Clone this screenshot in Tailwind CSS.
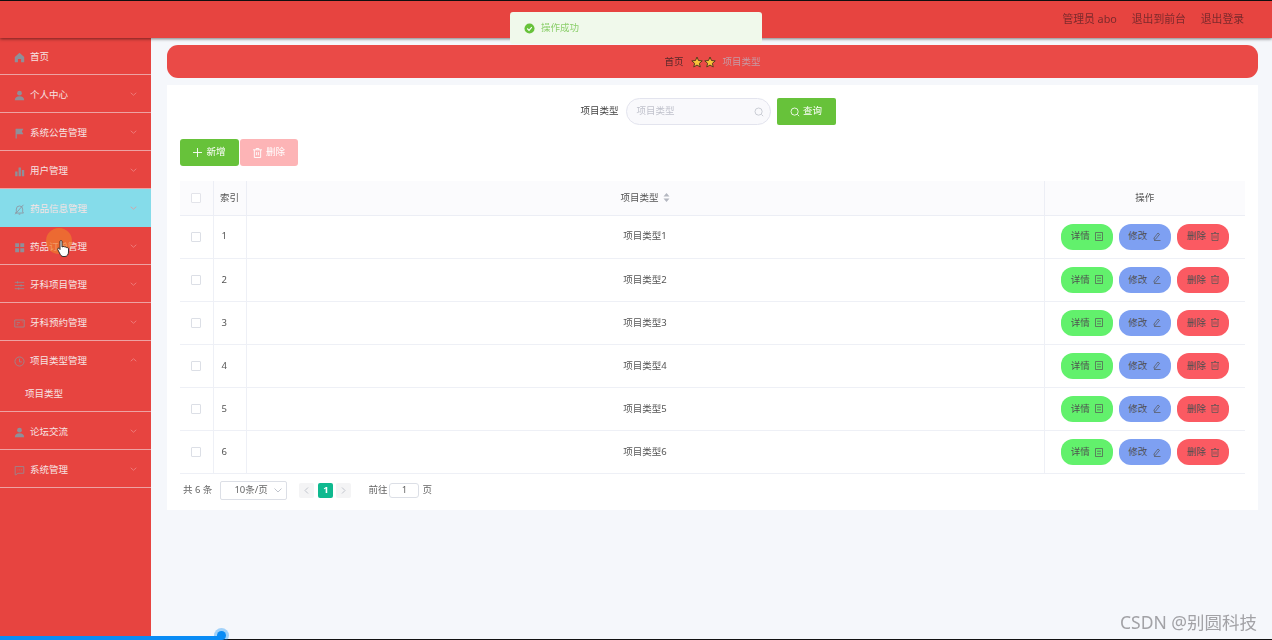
<!DOCTYPE html>
<html lang="zh-CN">
<head>
    <meta charset="UTF-8">
    <title>项目类型</title>
    <script src="https://cdn.jsdelivr.net/npm/@tailwindcss/browser@4"></script>
</head>
<body class="w-[1272px] h-[640px] overflow-hidden relative bg-[#f5f7fb] font-['Noto_Sans','Noto_Sans_CJK_SC',sans-serif] text-[10px] text-[#555] blur-[0.3px]">
    <div class="h-px bg-[#111]"></div>
    <!-- header -->
    <header class="h-[37px] bg-[#e74440] flex items-center justify-end pr-[28px] gap-[15px] text-[10.8px] text-[#7c2a2c] shadow-[0_1px_3px_rgba(0,0,0,0.5)] relative z-10">
        <span>管理员 abo</span>
        <span>退出到前台</span>
        <span>退出登录</span>
    </header>

    <div class="flex h-[602px]">
        <!-- sidebar -->
        <aside class="w-[151px] shrink-0 bg-[#e74440] text-[9.5px] text-[#f6e3e3] -mt-px" id="menu"></aside>

        <!-- main -->
        <main class="flex-1 pl-4 pr-[14px] pt-[7px]">
            <div class="h-[33px] rounded-[11px] bg-[#ea4a47] flex items-center justify-center gap-[7px] text-[9.5px] pt-[1px]">
                <span class="text-[#57282a]">首页</span>
                <span class="flex gap-px">
                    <svg class="w-3 h-3" viewBox="0 0 24 24"><path d="M12 2l3 7 7.500.700-5.700 5 1.700 7.300-6.500-3.900-6.500 3.900 1.700-7.300-5.700-5 7.500-.700z" fill="#f8c33a" stroke="#5a3a20" stroke-width="2"/></svg>
                    <svg class="w-3 h-3" viewBox="0 0 24 24"><path d="M12 2l3 7 7.500.700-5.700 5 1.700 7.300-6.500-3.900-6.500 3.900 1.700-7.300-5.700-5 7.500-.700z" fill="#f8c33a" stroke="#5a3a20" stroke-width="2"/></svg>
                </span>
                <span class="text-[#c79aa4]">项目类型</span>
            </div>

            <section class="mt-[7px] h-[425px] bg-white px-[13px] pt-[13px]">
                <div class="flex items-center justify-center gap-[6px] h-[27px] pr-[9px]">
                    <span class="text-[#444] text-[9.5px] mr-[1px]">项目类型</span>
                    <div class="w-[145px] h-[27px] rounded-[14px] border border-[#e3e4ee] bg-[#f9f9fc] flex items-center justify-between pl-[10px] pr-[6px] text-[#c0c2cc] text-[9.5px]">
                        <span>项目类型</span>
                        <svg class="w-[10px] h-[10px]" viewBox="0 0 12 12" fill="none" stroke="#c0c4cc"><circle cx="5.500" cy="5.500" r="4.300"/><path d="M9 9l2 2"/></svg>
                    </div>
                    <button class="w-[59px] h-[27px] rounded-[2px] bg-[#67c23a] text-white text-[9.5px] flex items-center justify-center gap-[3px]">
                        <svg class="w-[10px] h-[10px]" viewBox="0 0 12 12" fill="none" stroke="#fff"><circle cx="5.500" cy="5.500" r="4.300"/><path d="M9 9l2 2"/></svg>
                        查询
                    </button>
                </div>

                <div class="flex mt-[14px] gap-px h-[27px] text-[9.5px] text-white">
                    <button class="w-[59px] rounded-[3px] bg-[#67c23a] flex items-center justify-center gap-[4px]">
                        <svg class="w-[9px] h-[9px]" viewBox="0 0 10 10" fill="none" stroke="#fff"><path d="M5 0v10M0 5h10"/></svg>
                        新增
                    </button>
                    <button class="w-[58px] rounded-[3px] bg-[#fdb4b6] flex items-center justify-center gap-[4px]">
                        <svg class="w-[9px] h-[10px]" viewBox="0 0 10 11" fill="none" stroke="#fff"><path d="M0 2h10M3.500 2V.500h3V2M1.500 2v8.500h7V2M4 4.500v3.500M6 4.500v3.500"/></svg>
                        删除
                    </button>
                </div>

                <table class="mt-[15px] w-[1065px] table-fixed border-collapse text-[9.5px]">
                    <colgroup>
                        <col class="w-[33px]"><col class="w-[33px]"><col class="w-[798px]"><col class="w-[201px]">
                    </colgroup>
                    <thead>
                        <tr class="h-[34px] bg-[#fbfbfd] border-b border-[#eceef5] text-[#555] font-normal">
                            <th class="border-r border-[#eceef5] font-normal"><span class="block w-[10px] h-[10px] mx-auto border border-[#e3e4ea] rounded-[1px] bg-white"></span></th>
                            <th class="border-r border-[#eceef5] font-normal">索引</th>
                            <th class="border-r border-[#eceef5] font-normal">
                                <span class="inline-flex items-center gap-[4px]">项目类型
                                    <svg class="w-[7px] h-[9px]" viewBox="0 0 7 9" fill="#b4b7c0"><path d="M3.500 0l3 3.500h-6zM3.500 9l3-3.500h-6z"/></svg>
                                </span>
                            </th>
                            <th class="font-normal">操作</th>
                        </tr>
                    </thead>
                    <tbody id="rows"></tbody>
                </table>

                <div class="flex items-center h-[33px] pl-[3px] text-[9.5px] text-[#666]">
                    <span>共 6 条</span>
                    <div class="ml-[8px] w-[67px] h-[19px] border border-[#dcdfe6] rounded-[2px] flex items-center justify-between pl-[13px] pr-[4px]">
                        <span>10条/页</span>
                        <svg class="w-[8px] h-[5px]" viewBox="0 0 8 5" fill="none" stroke="#c0c4cc"><path d="M.500.500L4 4 7.500.500"/></svg>
                    </div>
                    <span class="ml-[12px] w-[15px] h-[15px] rounded-[2px] bg-[#f4f4f5] flex items-center justify-center">
                        <svg class="w-[5px] h-[7px]" viewBox="0 0 5 7" fill="none" stroke="#c0c4cc"><path d="M4 .500L1 3.500 4 6.500"/></svg>
                    </span>
                    <span class="ml-[4px] w-[15px] h-[15px] rounded-[2px] bg-[#0fb98f] text-white font-bold flex items-center justify-center">1</span>
                    <span class="ml-[3px] w-[15px] h-[15px] rounded-[2px] bg-[#f4f4f5] flex items-center justify-center">
                        <svg class="w-[5px] h-[7px]" viewBox="0 0 5 7" fill="none" stroke="#c0c4cc"><path d="M1 .500L4 3.500 1 6.500"/></svg>
                    </span>
                    <span class="ml-[17px]">前往</span>
                    <span class="ml-[2px] w-[30px] h-[15px] border border-[#dcdfe6] rounded-[3px] flex items-center justify-center">1</span>
                    <span class="ml-[3px]">页</span>
                </div>
            </section>
        </main>
    </div>

    <!-- toast -->
    <div class="absolute left-[510px] top-[12px] w-[252px] h-[32px] z-20 rounded-[3px] bg-[#f0f9eb] flex items-center pl-[14px] gap-[6px] text-[9.5px] text-[#8ccf6c]">
        <svg class="w-[11px] h-[11px]" viewBox="0 0 12 12"><circle cx="6" cy="6" r="5.500" fill="#67c23a"/><path d="M3.500 6l2 2 3-3.500" fill="none" stroke="#fff" stroke-width="1.200"/></svg>
        操作成功
    </div>

    <!-- recording overlay: click marker, hand cursor, progress bar, watermark -->
    <div class="absolute left-[46px] top-[228px] w-[26px] h-[26px] rounded-full bg-[#ee7a2c]/70 z-20"></div>
    <svg class="absolute left-[57px] top-[240px] w-[13px] h-[17px] z-30" viewBox="0 0 13 17">
        <path d="M3 1.500c0-1.300 2-1.300 2 0V7l1-.500c.800-.300 1.300 0 1.500.500.800-.300 1.300 0 1.600.500.800-.300 2.400 0 2.400 1.500V12c0 2.500-1.500 4.500-3.500 4.500H6C4.500 16.500 3.500 15 2.500 13L.700 9.500c-.500-1 .800-1.800 1.500-1L3 9.500z" fill="#fff" stroke="#222" stroke-width=".9"/>
    </svg>
    <div class="absolute left-0 bottom-0 w-full h-px bg-[#111] z-20"></div>
    <div class="absolute left-0 bottom-0 w-[221px] h-[4px] bg-[#0a8cf5] z-20"></div>
    <div class="absolute left-[214px] top-[628px] w-[15px] h-[15px] rounded-full bg-[#0a8cf5]/35 z-20"></div>
    <div class="absolute left-[217px] top-[631px] w-[9px] h-[9px] rounded-full bg-[#0a8cf5] z-20"></div>
    <div class="absolute right-[15px] top-[611px] text-[17.500px] leading-[22px] text-[#a2a2a6] z-20">CSDN @别圆科技</div>

    <script>
        const chevronDown = '<path d="M1 1l4 3.500L9 1"/>';
        const chevronUp = '<path d="M1 4.500L5 1l4 3.500"/>';
        const icons = {
            home: '<path d="M7 1L1 6.500V13h4V9h4v4h4V6.500z" fill="currentColor"/>',
            user: '<circle cx="7" cy="4" r="3" fill="currentColor"/><path d="M1 13c0-3.500 2.500-5 6-5s6 1.500 6 5z" fill="currentColor"/>',
            flag: '<path d="M2 1h10l-2 3.500L12 8H3.500v5.500H2z" fill="currentColor"/>',
            chart: '<path d="M1.500 7h3v6h-3zM5.800 2h3v11h-3zM10 5h3v8h-3z" fill="currentColor"/>',
            bell: '<path d="M3 10V6.500a4 4 0 018 0V10l1 1.500H2zM6 13h2M1.500 13L12 1" fill="none" stroke="currentColor"/>',
            grid: '<path d="M1.500 1.500h5v5h-5zM8 1.500h5v5H8zM1.500 8h5v5h-5zM8 8h5v5H8z" fill="currentColor"/>',
            sliders: '<path d="M1 3h12M1 7h12M1 11h12M4.500 1.500v3M9 5.500v3M6 9.500v3" fill="none" stroke="currentColor"/>',
            card: '<path d="M1 2.500h12v9H1zM3.500 6h4M3.500 8.500h2M10 5h1" fill="none" stroke="currentColor"/>',
            clock: '<circle cx="7" cy="7" r="5.800" fill="none" stroke="currentColor"/><path d="M7 3.500V7.500h3" fill="none" stroke="currentColor"/>',
            chat: '<path d="M1.500 2h11v8.500H5L2.500 12.500l-1 0zM4.500 6.300h1M6.800 6.300h1M9 6.300h1" fill="none" stroke="currentColor"/>'
        };
        const menu = [
            { label: '首页', icon: 'home', plain: true },
            { label: '个人中心', icon: 'user' },
            { label: '系统公告管理', icon: 'flag' },
            { label: '用户管理', icon: 'chart' },
            { label: '药品信息管理', icon: 'bell', active: true },
            { label: '药品订单管理', icon: 'grid' },
            { label: '牙科项目管理', icon: 'sliders' },
            { label: '牙科预约管理', icon: 'card' },
            { label: '项目类型管理', icon: 'clock', open: true, sub: '项目类型' },
            { label: '论坛交流', icon: 'user' },
            { label: '系统管理', icon: 'chat' }
        ];

        document.getElementById('menu').innerHTML = menu.map(item => `
            <div class="border-b border-[#eda3a3] ${item.active ? 'bg-[#85dcea] border-transparent' : ''}">
                <div class="h-[37px] flex items-center pl-[14px] pr-[14px] gap-[5px] pt-[3px]">
                    <svg class="w-[11px] h-[11px] shrink-0 text-[#8f8f99]" viewBox="0 0 14 14">${icons[item.icon]}</svg>
                    <span class="flex-1">${item.label}</span>
                    ${item.plain ? '' : `<svg class="w-[7px] h-[4px] -mt-[3px]" viewBox="0 0 10 5.500" fill="none" stroke="#f08f8f">${item.open ? chevronUp : chevronDown}</svg>`}
                </div>
                ${item.sub ? `<div class="h-[33px] pl-[25px] flex items-center">${item.sub}</div>` : ''}
            </div>`).join('');

        const pill = 'w-[52px] h-[26px] rounded-[12px] flex items-center justify-center gap-[5px] text-[#4f4f50]';
        const detailIcon = '<svg class="w-[8px] h-[9px]" viewBox="0 0 8 9" fill="none" stroke="#555" stroke-width=".7"><path d="M.500.500h7v8h-7zM2 3.200h4M2 5.800h4"/></svg>';
        const editIcon = '<svg class="w-[9px] h-[9px]" viewBox="0 0 9 9" fill="none" stroke="#555" stroke-width=".7"><path d="M2 6L6 1l1.500 1.300-4 5H2zM2 8.500h6.500"/></svg>';
        const deleteIcon = '<svg class="w-[8px] h-[9px]" viewBox="0 0 8 9" fill="none" stroke="#555" stroke-width=".7"><path d="M0 1.500h8M1 1.500v7h6v-7M3 .500h2M3 3.500v3M5 3.500v3"/></svg>';

        document.getElementById('rows').innerHTML = [1, 2, 3, 4, 5, 6].map(i => `
            <tr class="h-[43.100px] border-b border-[#eef0f6]">
                <td class="border-r border-[#eef0f6]"><span class="block w-[10px] h-[10px] ml-[11px] border border-[#dcdfe6] rounded-[1px]"></span></td>
                <td class="border-r border-[#eef0f6] pl-[8px]">${i}</td>
                <td class="border-r border-[#eef0f6] text-center">项目类型${i}</td>
                <td>
                    <div class="flex justify-center gap-[6px]">
                        <span class="${pill} bg-[#62f16c]">详情 ${detailIcon}</span>
                        <span class="${pill} bg-[#7ea0f2]">修改 ${editIcon}</span>
                        <span class="${pill} bg-[#fb5a62]">删除 ${deleteIcon}</span>
                    </div>
                </td>
            </tr>`).join('');
    </script>
</body>
</html>
